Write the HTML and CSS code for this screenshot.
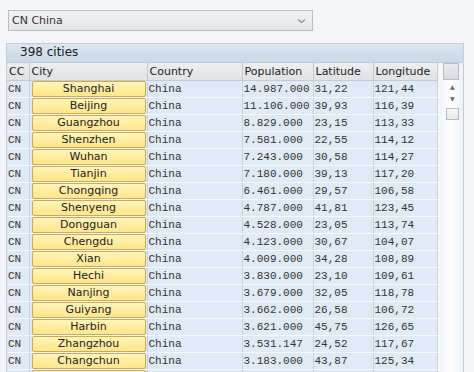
FILE: index.html
```html
<!DOCTYPE html>
<html lang="en">
<head>
    <meta charset="UTF-8">
    <title>Cities</title>
    <link rel="stylesheet" href="styles.css">
</head>
<body>
    <div class="select">
        <span>CN China</span>
        <svg class="chevron" width="9" height="6" viewBox="0 0 9 6"><path d="M1 1.5 L4.5 4.5 L8 1.5" fill="none" stroke="#8a8f96" stroke-width="1.1"/></svg>
    </div>

    <div class="panel">
        <div class="panel-title">398 cities</div>
        <div class="panel-body">
            <table class="grid">
                <colgroup>
                    <col style="width:22px"><col style="width:118px"><col style="width:95px">
                    <col style="width:71px"><col style="width:60px"><col style="width:64px">
                </colgroup>
                <thead>
                    <tr><th>CC</th><th>City</th><th>Country</th><th>Population</th><th>Latitude</th><th>Longitude</th></tr>
                </thead>
                <tbody>
                    <tr><td class="mono">CN</td><td><div class="btn">Shanghai</div></td><td class="mono">China</td><td class="mono">14.987.000</td><td class="mono">31,22</td><td class="mono">121,44</td></tr>
                    <tr><td class="mono">CN</td><td><div class="btn">Beijing</div></td><td class="mono">China</td><td class="mono">11.106.000</td><td class="mono">39,93</td><td class="mono">116,39</td></tr>
                    <tr><td class="mono">CN</td><td><div class="btn">Guangzhou</div></td><td class="mono">China</td><td class="mono">8.829.000</td><td class="mono">23,15</td><td class="mono">113,33</td></tr>
                    <tr><td class="mono">CN</td><td><div class="btn">Shenzhen</div></td><td class="mono">China</td><td class="mono">7.581.000</td><td class="mono">22,55</td><td class="mono">114,12</td></tr>
                    <tr><td class="mono">CN</td><td><div class="btn">Wuhan</div></td><td class="mono">China</td><td class="mono">7.243.000</td><td class="mono">30,58</td><td class="mono">114,27</td></tr>
                    <tr><td class="mono">CN</td><td><div class="btn">Tianjin</div></td><td class="mono">China</td><td class="mono">7.180.000</td><td class="mono">39,13</td><td class="mono">117,20</td></tr>
                    <tr><td class="mono">CN</td><td><div class="btn">Chongqing</div></td><td class="mono">China</td><td class="mono">6.461.000</td><td class="mono">29,57</td><td class="mono">106,58</td></tr>
                    <tr><td class="mono">CN</td><td><div class="btn">Shenyeng</div></td><td class="mono">China</td><td class="mono">4.787.000</td><td class="mono">41,81</td><td class="mono">123,45</td></tr>
                    <tr><td class="mono">CN</td><td><div class="btn">Dongguan</div></td><td class="mono">China</td><td class="mono">4.528.000</td><td class="mono">23,05</td><td class="mono">113,74</td></tr>
                    <tr><td class="mono">CN</td><td><div class="btn">Chengdu</div></td><td class="mono">China</td><td class="mono">4.123.000</td><td class="mono">30,67</td><td class="mono">104,07</td></tr>
                    <tr><td class="mono">CN</td><td><div class="btn">Xian</div></td><td class="mono">China</td><td class="mono">4.009.000</td><td class="mono">34,28</td><td class="mono">108,89</td></tr>
                    <tr><td class="mono">CN</td><td><div class="btn">Hechi</div></td><td class="mono">China</td><td class="mono">3.830.000</td><td class="mono">23,10</td><td class="mono">109,61</td></tr>
                    <tr><td class="mono">CN</td><td><div class="btn">Nanjing</div></td><td class="mono">China</td><td class="mono">3.679.000</td><td class="mono">32,05</td><td class="mono">118,78</td></tr>
                    <tr><td class="mono">CN</td><td><div class="btn">Guiyang</div></td><td class="mono">China</td><td class="mono">3.662.000</td><td class="mono">26,58</td><td class="mono">106,72</td></tr>
                    <tr><td class="mono">CN</td><td><div class="btn">Harbin</div></td><td class="mono">China</td><td class="mono">3.621.000</td><td class="mono">45,75</td><td class="mono">126,65</td></tr>
                    <tr><td class="mono">CN</td><td><div class="btn">Zhangzhou</div></td><td class="mono">China</td><td class="mono">3.531.147</td><td class="mono">24,52</td><td class="mono">117,67</td></tr>
                    <tr><td class="mono">CN</td><td><div class="btn">Changchun</div></td><td class="mono">China</td><td class="mono">3.183.000</td><td class="mono">43,87</td><td class="mono">125,34</td></tr>
                    <tr><td class="mono"></td><td><div class="btn"></div></td><td class="mono"></td><td class="mono"></td><td class="mono"></td><td class="mono"></td></tr>
                </tbody>
            </table>
            <div class="scroll">
                <div class="scroll-corner"></div>
                <div class="arrow">&#9650;</div>
                <div class="arrow">&#9660;</div>
                <div class="thumb"></div>
            </div>
        </div>
    </div>
</body>
</html>
```

FILE: styles.css
```css
/* Page */
body {
    margin: 0;
    background-color: #f3f5f8;
    font-family: Tahoma, "DejaVu Sans", sans-serif;
    font-size: 11px;
    color: #222;
    overflow: hidden;
    height: 372px;
}

/* Country dropdown */
.select {
    margin: 10px 0 0 8px;
    width: 300px;
    height: 19px;
    border: 1px solid #b9bec5;
    background: linear-gradient(#f0f1f2, #e4e6e9);
    display: flex;
    align-items: center;
    justify-content: space-between;
    padding: 0 0 0 3px;
    font-size: 11px;
    color: #333;
}

.chevron {
    margin-right: 6px;
}

/* Table panel */
.panel {
    margin: 12px 0 0 6px;
    width: 456px;
    border: 1px solid #c3ced9;
    border-bottom: none;
    background-color: #f7f8fa;
}

.panel-title {
    height: 18px;
    line-height: 17px;
    padding-left: 13px;
    background: linear-gradient(#dbe6f0, #c8d8e7);
    border-bottom: 1px solid #c0cdd9;
    font-size: 12px;
    color: #222;
}

.panel-body {
    display: flex;
}

/* The grid of cities */
.grid {
    border-collapse: collapse;
    table-layout: fixed;
    width: 430px;
}

.grid th {
    height: 17px;
    padding: 0 0 0 2px;
    text-align: left;
    font-weight: normal;
    font-size: 11px;
    color: #222;
    background: linear-gradient(#eceef0, #dfe2e6);
    border-right: 1px solid #c5cad0;
    border-bottom: 1px solid #c5cad0;
    white-space: nowrap;
    overflow: hidden;
}

.grid td {
    height: 16px;
    padding: 0;
    background-color: #e0eaf4;
    border-right: 1px solid #c8d3de;
    border-bottom: 1px solid #f4f7fa;
    white-space: nowrap;
    overflow: hidden;
}

.grid td.mono {
    font-family: "Liberation Mono", "Courier New", monospace;
    font-size: 11px;
    padding-left: 1px;
    color: #333;
}

/* Yellow city buttons */
.btn {
    margin: 0 1px 0 2px;
    height: 14px;
    line-height: 14px;
    text-align: center;
    font-size: 11px;
    color: #222;
    background: linear-gradient(#fff4b8, #fde68a);
    border: 1px solid #c9ab58;
    border-radius: 2px;
}

/* Vertical scrollbar */
.scroll {
    width: 26px;
    display: flex;
    flex-direction: column;
    align-items: center;
    background: linear-gradient(90deg, #f2f4f7, #ffffff 50%, #eef1f4);
}

.scroll-corner {
    margin: 0 0 0 2px;
    width: 14px;
    height: 15px;
    border: 1px solid #b5bcc4;
    background: linear-gradient(#e8eaed, #d8dce0);
}

.arrow {
    font-size: 6px;
    color: #666;
    height: 12px;
    line-height: 14px;
    margin-left: 4px;
}

.thumb {
    margin: 4px 0 0 4px;
    width: 11px;
    height: 10px;
    border: 1px solid #b5bcc4;
    background: linear-gradient(#f6f7f8, #e6e8eb);
}
```
